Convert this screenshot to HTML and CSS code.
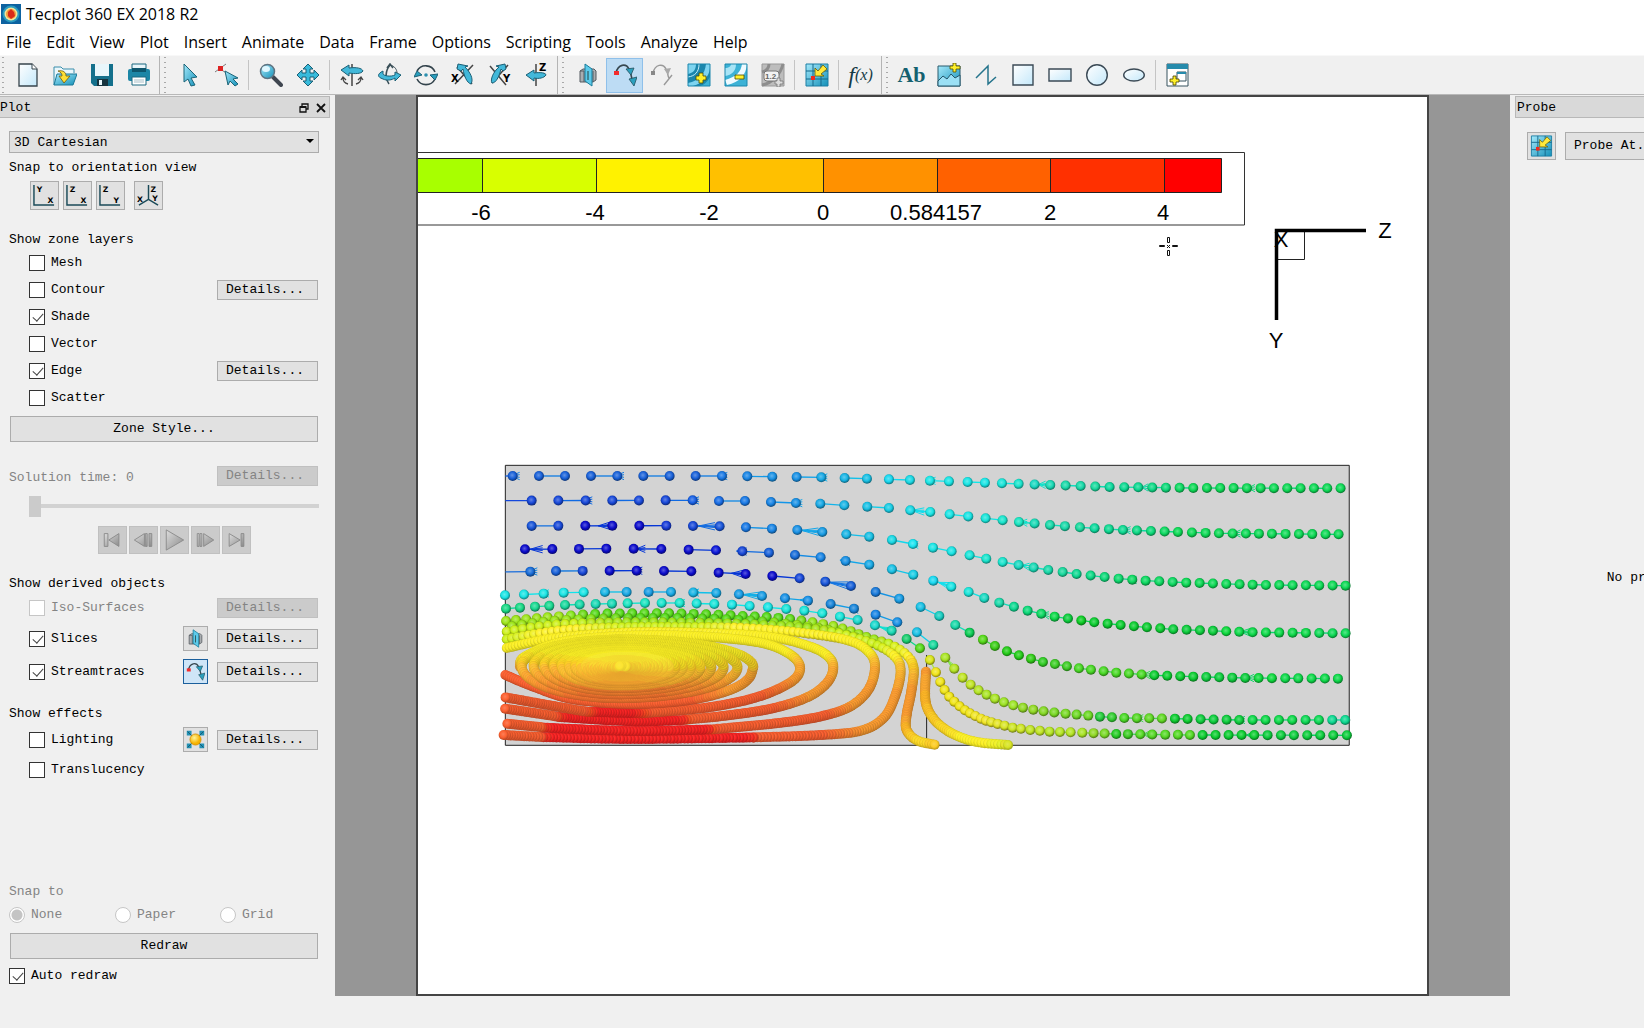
FILE: index.html
```
<!DOCTYPE html>
<html lang="en">
<head>
<meta charset="utf-8">
<title>Tecplot 360 EX 2018 R2</title>
<link rel="stylesheet" href="styles.css">
</head>
<body>
<svg class="defs" aria-hidden="true">
  <defs>
    <linearGradient id="aqua" x1="0" y1="0" x2="1" y2="1"><stop offset="0" stop-color="#a5e9fb"/><stop offset="1" stop-color="#1390b8"/></linearGradient>
    <linearGradient id="pale" x1="0" y1="0" x2="1" y2="1"><stop offset="0" stop-color="#fff"/><stop offset="1" stop-color="#c4e8fa"/></linearGradient>
    <linearGradient id="steel" x1="0" y1="0" x2="1" y2="1"><stop offset="0" stop-color="#ddd"/><stop offset="1" stop-color="#8a8a8a"/></linearGradient>
    <radialGradient id="sun" cx=".4" cy=".35"><stop offset="0" stop-color="#fff59a"/><stop offset="1" stop-color="#f6b300"/></radialGradient>
  </defs>
  <symbol id="i-slice" viewBox="0 0 24 24">
    <path d="M4 8l3-2h11l2 2v9l-3 2H4z" fill="#a9adb0" stroke="#555b60"/><path d="M4 8h4v11M17 19V8" fill="none" stroke="#555b60"/>
    <path d="M9 1l7 5v17l-7-5z" fill="#5ccaea" stroke="#197d9c"/><path d="M12 8v9" stroke="#244"/>
  </symbol>
  <symbol id="i-stream" viewBox="0 0 24 24">
    <path d="M3 10C5 1 13 0 16 6s2 9 4 13" fill="none" stroke="#37474f" stroke-width="1.6"/>
    <path d="M13 6l8-1-3 7zM16 16l8-2-3 9z" fill="#2ba0be" stroke="#24505e" stroke-width=".8"/><path d="M1 8h5v4H1z" fill="#f32c2c"/>
  </symbol>
  <symbol id="i-probe" viewBox="0 0 24 24">
    <path d="M1 1h22v22H1z" fill="url(#aqua)" stroke="#1c7fa4"/><path d="M1 8h22M1 16h22M8 1v22M16 1v22" stroke="#17688a" fill="none"/>
    <path d="M6 13h4v4H6z" fill="#f02a1c"/><path d="M10 13V5l3 3 5-6 4 4-6 5 3 2z" fill="#ffe93b" stroke="#6a5c00" stroke-width=".8"/>
  </symbol>
</svg>

<header class="title-bar">
  <svg width="20" height="20" viewBox="0 0 20 20" aria-hidden="true"><path d="M0 0h20v20H0z" fill="#0d62a0"/><circle cx="10" cy="10" r="8.5" fill="#2b9cc0"/><circle cx="10" cy="10" r="6.5" fill="#f3e59a"/><circle cx="10" cy="10" r="5" fill="#f29b3c"/><path d="M10 5l3 3 1 4-4 3-3-3 0-4z" fill="#d92a1a"/></svg>
  <h1>Tecplot 360 EX 2018 R2</h1>
</header>

<nav class="menu-bar" aria-label="Main menu">
  <button>File</button><button>Edit</button><button>View</button><button>Plot</button><button>Insert</button><button>Animate</button><button>Data</button><button>Frame</button><button>Options</button><button>Scripting</button><button>Tools</button><button>Analyze</button><button>Help</button>
</nav>

<div class="toolbar" role="toolbar" aria-label="Tools">
  <span class="grip first"></span>
  <button aria-label="New"><svg viewBox="0 0 24 24"><path d="M3 1h13l5 5v17H3z" fill="url(#pale)" stroke="#37444c" stroke-width="1.3"/><path d="M16 1v5h5" fill="#fff" stroke="#37444c"/></svg></button>
  <button aria-label="Open"><svg viewBox="0 0 24 24"><path d="M1 22V4h7l2 2h11v4" fill="#e9f6fb" stroke="#3a8eac"/><path d="M1 22L4 11h20l-4 11z" fill="url(#aqua)" stroke="#1a7898"/><path d="M5 8c5-1 8 1 8 5h4l-6 7-5-7h3c0-2-1-4-4-5z" fill="#ffdf35" stroke="#6d5a10" stroke-width=".8"/></svg></button>
  <button aria-label="Save"><svg viewBox="0 0 24 24"><path d="M1 1h22v22H4l-3-3z" fill="#14708c"/><path d="M5 1h14v12H5z" fill="#e8f6fb"/><path d="M7 16h11v7H7z" fill="#16343f"/><path d="M9 17h3v5H9z" fill="#e8f6fb"/></svg></button>
  <button aria-label="Print"><svg viewBox="0 0 24 24"><path d="M5 1h14v8H5z" fill="#e7f5fa" stroke="#1b6880"/><rect x="1" y="6" width="22" height="12" rx="2" fill="#1c86a6"/><path d="M5 5h14v4H5z" fill="#0e566d"/><path d="M5 14h14v8H5z" fill="#fff" stroke="#1b6880"/><path d="M7 17h10M7 19h10" stroke="#a8bfc8"/></svg></button>
  <span class="grip"></span>
  <button aria-label="Select"><svg viewBox="0 0 24 24"><path d="M6 1l13 13-6 1 4 7-4 1-3-7-4 3z" fill="url(#aqua)" stroke="#1b6478"/></svg></button>
  <button aria-label="Adjust"><svg viewBox="0 0 24 24"><path d="M0 9L11 1M5 6l8 5" stroke="#7a7a7a"/><path d="M3 3h5v5H3z" fill="#d22"/><path d="M10 8l13 7-5 1 5 5-3 2-5-5-2 4z" fill="url(#aqua)" stroke="#1b6478"/></svg></button>
  <span class="rule"></span>
  <button aria-label="Zoom"><svg viewBox="0 0 24 24"><path d="M14 14l8 8" stroke="#3f4650" stroke-width="4" stroke-linecap="round"/><circle cx="8.500" cy="8.500" r="7" fill="url(#aqua)" stroke="#5f7482" stroke-width="1.500"/><ellipse cx="7" cy="6" rx="4" ry="3" fill="#dff7ff"/></svg></button>
  <button aria-label="Translate"><svg viewBox="0 0 24 24"><path d="M12 1l5 5h-3v4h4V7l5 5-5 5v-3h-4v4h3l-5 5-5-5h3v-4H6v3l-5-5 5-5v3h4V6H7z" fill="#38bbdc" stroke="#1b5f75"/></svg></button>
  <span class="rule"></span>
  <button aria-label="Rotate spherical"><svg viewBox="0 0 24 24"><path d="M12 1v22" stroke="#444" stroke-width="1.500"/><path d="M1 7l8-5v3c7-1 13 0 14 3-2 3-8 3-14 2v3z" fill="#42b8d9" stroke="#1b5f75"/><path d="M8 21c-4-1-5-4-5-6M1 17l2-3 3 3M16 21c4-1 5-4 5-6M18 17l3-3 2 3" fill="none" stroke="#444" stroke-width="1.300"/></svg></button>
  <button aria-label="Rotate rollerball"><svg viewBox="0 0 24 24"><path d="M12 21C8 16 8 8 13 2M10 5l3-4 3 4" fill="none" stroke="#3a4f58" stroke-width="1.600"/><path d="M6 8c-6 3-6 6 0 8 4 2 9 1 12-1v3l6-6-6-3v3c-4 2-11 1-12-1z" fill="#42b8d9" stroke="#1b5f75"/><path d="M13 2c5 1 7 5 7 8" fill="none" stroke="#3a4f58"/></svg></button>
  <button aria-label="Rotate twist"><svg viewBox="0 0 24 24"><path d="M3 8a10 10 0 0 1 18 1M21 16a10 10 0 0 1-18 0" fill="none" stroke="#33434c" stroke-width="1.600"/><path d="M0 14l3-6 5 4zM16 12l8-1-3 6z" fill="#2b9fbe" stroke="#1b5f75"/><circle cx="12" cy="12" r="1.800" fill="#2b8fae"/></svg></button>
  <button aria-label="Rotate X"><svg viewBox="0 0 24 24"><path d="M22 2L4 21M6 4l15 17" stroke="#444" stroke-width="1.500"/><path d="M6 6l1-5 10 2-3 1c5 5 9 12 6 17-4-1-7-8-8-15l-2 2z" fill="#42b8d9" stroke="#1b5f75"/><text x="0" y="19" class="tool-letter">X</text></svg></button>
  <button aria-label="Rotate Y"><svg viewBox="0 0 24 24"><path d="M2 3l16 19M20 2L4 20" stroke="#444" stroke-width="1.500"/><path d="M18 6l-1-5-9 2 3 1C5 9 2 17 4 20c4 0 7-6 9-14l2 2z" fill="#42b8d9" stroke="#1b5f75"/><text x="15" y="19" class="tool-letter">Y</text></svg></button>
  <button aria-label="Rotate Z"><svg viewBox="0 0 24 24"><path d="M11 1v22" stroke="#444" stroke-width="1.500"/><path d="M1 12l8-5v3c7-1 12 0 12 2-2 3-7 4-12 3v3z" fill="#42b8d9" stroke="#1b5f75"/><text x="14" y="8" class="tool-letter">Z</text></svg></button>
  <span class="grip"></span>
  <button aria-label="Slice"><svg><use href="#i-slice"/></svg></button>
  <button aria-label="Streamtrace" class="active" aria-pressed="true"><svg><use href="#i-stream"/></svg></button>
  <button aria-label="Streamtrace termination line" disabled><svg viewBox="0 0 24 24"><path d="M3 10C5 1 13 0 16 6s1 6 3 9M14 22l8-10" fill="none" stroke="#999" stroke-width="1.400"/><path d="M14 6l7-1-3 7z" fill="#aaa"/><path d="M1 8h4v4H1z" fill="#888"/></svg></button>
  <button aria-label="Add contour level"><svg viewBox="0 0 24 24"><path d="M1 1h22v22H1z" fill="#1b86ac"/><path d="M1 1h8c0 6-3 9-8 10z" fill="#7ed4f0"/><path d="M12 1c0 8-4 12-11 13" fill="none" stroke="#c5eefb"/><path d="M23 5c-1 9-7 15-17 18H1v-3C12 18 18 11 19 1h4z" fill="#7ed4f0"/><path d="M23 14c-3 5-6 8-10 9h10z" fill="#3cb2d6"/><path d="M12 10h4v3h3v4h-3v3h-4v-3H9v-4h3z" fill="#fff02a" stroke="#4a4a00" stroke-width=".8"/><path d="M1 1h22v22H1z" fill="none" stroke="#1b86ac"/></svg></button>
  <button aria-label="Delete contour level"><svg viewBox="0 0 24 24"><path d="M1 1h22v22H1z" fill="#3cb2d6"/><path d="M1 5c4 0 6-2 6-4h5c0 7-4 11-11 12z" fill="#a8e4f6"/><path d="M1 17C12 14 17 9 18 1h5c-1 11-7 18-20 21z" fill="#effaff"/><path d="M11 12h9v4h-9z" fill="#fff02a" stroke="#4a4a00" stroke-width=".8"/><path d="M1 1h22v22H1z" fill="none" stroke="#1b86ac"/></svg></button>
  <button aria-label="Add contour label" disabled><svg viewBox="0 0 24 24"><path d="M1 1h22v22H1z" fill="#bdbdbd" stroke="#999"/><path d="M1 22C12 20 20 10 22 1M8 1c0 5-3 7-7 8" fill="none" stroke="#8d8d8d" stroke-width="3"/><rect x="3" y="8" width="15" height="10" rx="3" fill="#f2f2f2" stroke="#777"/><text x="4" y="16" class="tool-number">1.2</text><path d="M16 15h3v3h3v3h-3v3h-3v-3h-2v-3h2z" fill="#ddd" stroke="#777" stroke-width=".8"/></svg></button>
  <span class="rule"></span>
  <button aria-label="Probe"><svg><use href="#i-probe"/></svg></button>
  <span class="rule"></span>
  <button aria-label="Extract function" class="fx">f<small>(x)</small></button>
  <span class="grip"></span>
  <button aria-label="Text" class="ab">Ab</button>
  <button aria-label="Image"><svg viewBox="0 0 24 24"><path d="M1 3h22v20H1z" fill="url(#aqua)" stroke="#2a5a6c"/><path d="M1 18l5-5 4 3 4-5 4 4 5-3v11H1z" fill="#9be0f5" stroke="#24566a"/><path d="M16 0h3v3h4v3h-4v3h-3V6h-3V3h3z" fill="#fff02a" stroke="#555000" stroke-width=".8"/></svg></button>
  <button aria-label="Polyline"><svg viewBox="0 0 24 24"><path d="M2 15L14 3v18l8-7" fill="none" stroke="#25748c" stroke-width="1.500"/></svg></button>
  <button aria-label="Square"><svg viewBox="0 0 24 24"><path d="M2 2h20v20H2z" fill="url(#pale)" stroke="#3b4a56" stroke-width="1.400"/></svg></button>
  <button aria-label="Rectangle"><svg viewBox="0 0 24 24"><path d="M1 6h22v12H1z" fill="url(#pale)" stroke="#3b4a56" stroke-width="1.400"/></svg></button>
  <button aria-label="Circle"><svg viewBox="0 0 24 24"><circle cx="12" cy="12" r="10.300" fill="url(#pale)" stroke="#3b4a56" stroke-width="1.400"/></svg></button>
  <button aria-label="Ellipse"><svg viewBox="0 0 24 24"><ellipse cx="12" cy="12" rx="10.300" ry="6" fill="url(#pale)" stroke="#3b4a56" stroke-width="1.400"/></svg></button>
  <span class="rule"></span>
  <button aria-label="Create frame"><svg viewBox="0 0 24 24"><path d="M1 1h21v22H1z" fill="#fff" stroke="#37525f"/><path d="M1 1h21v5H1z" fill="#268bac"/><path d="M11 9h9v9h-9z" fill="#fff" stroke="#37525f"/><path d="M11 9h9v2h-9z" fill="#268bac"/><path d="M7 13h3v3h3v3h-3v3H7v-3H4v-3h3z" fill="#fff02a" stroke="#444000" stroke-width=".8"/></svg></button>
</div>

<main class="desk">
  <aside class="panel" aria-label="Plot">
    <div class="panel-head"><h2>Plot</h2>
      <button aria-label="Float"><svg width="10" height="10" viewBox="0 0 10 10"><path d="M3 3V1h6v5H7M1 4h6v5H1z" fill="none" stroke="#111" stroke-width="1.300"/><path d="M1 4h6" stroke="#111" stroke-width="2"/></svg></button>
      <button aria-label="Close"><svg width="10" height="10" viewBox="0 0 10 10"><path d="M1 1l8 8M9 1L1 9" stroke="#111" stroke-width="1.800"/></svg></button>
    </div>
    <div class="panel-body">
      <div class="combo"><select aria-label="Plot type"><option>3D Cartesian</option></select><svg width="8" height="5" viewBox="0 0 8 5" aria-hidden="true"><path d="M0 0h8L4 4z"/></svg></div>
      <h3 class="tall">Snap to orientation view</h3>
      <div class="snap">
        <button aria-label="XY view"><svg viewBox="0 0 24 24"><path d="M1 1v21h21" class="axis"/><text x="4" y="8">Y</text><text x="15" y="20">X</text></svg></button>
        <button aria-label="XZ view"><svg viewBox="0 0 24 24"><path d="M1 1v21h21" class="axis"/><text x="4" y="8">Z</text><text x="15" y="20">X</text></svg></button>
        <button aria-label="YZ view"><svg viewBox="0 0 24 24"><path d="M1 1v21h21" class="axis"/><text x="4" y="8">Z</text><text x="15" y="20">Y</text></svg></button>
        <button aria-label="3D view" class="iso"><svg viewBox="0 0 24 24"><path d="M12 1v15L2 22M12 16l10 6" class="axis"/><text x="14" y="8">Z</text><text x="0" y="19">X</text><text x="16" y="18">Y</text></svg></button>
      </div>
      <h3 class="zones">Show zone layers</h3>
      <div class="row"><label><input type="checkbox">Mesh</label></div>
      <div class="row"><label><input type="checkbox">Contour</label><button class="btn">Details...</button></div>
      <div class="row"><label><input type="checkbox" checked>Shade</label></div>
      <div class="row"><label><input type="checkbox">Vector</label></div>
      <div class="row"><label><input type="checkbox" checked>Edge</label><button class="btn">Details...</button></div>
      <div class="row"><label><input type="checkbox">Scatter</label></div>
      <button class="btn wide">Zone Style...</button>
      <div class="time"><span id="time-label">Solution time: 0</span><button class="btn" disabled>Details...</button></div>
      <input class="slider" type="range" min="0" max="1" value="0" disabled aria-labelledby="time-label">
      <div class="player">
        <button aria-label="First" disabled><svg viewBox="0 0 24 24"><path d="M3 5h4v14H3zM19 5v14L8 12z"/></svg></button>
        <button aria-label="Back" disabled><svg viewBox="0 0 24 24"><path d="M13 5v14L2 12zM14 5h2v14h-2zM18 5h3v14h-3z"/></svg></button>
        <button aria-label="Play" disabled><svg viewBox="0 0 24 24"><path d="M3 1l19 11L3 23z"/></svg></button>
        <button aria-label="Forward" disabled><svg viewBox="0 0 24 24"><path d="M3 5h2v14H3zM6 5h2v14H6zM10 5v14l11-7z"/></svg></button>
        <button aria-label="Last" disabled><svg viewBox="0 0 24 24"><path d="M4 5v14l12-7zM17 5h3v14h-3z"/></svg></button>
      </div>
      <h3 class="derived">Show derived objects</h3>
      <div class="row"><label class="off"><input type="checkbox" disabled>Iso-Surfaces</label><button class="btn" disabled>Details...</button></div>
      <div class="row roomy"><label><input type="checkbox" checked>Slices</label><button class="pick" aria-label="Place slice"><svg><use href="#i-slice"/></svg></button><button class="btn">Details...</button></div>
      <div class="row roomy"><label><input type="checkbox" checked>Streamtraces</label><button class="pick active" aria-label="Place streamtrace"><svg><use href="#i-stream"/></svg></button><button class="btn">Details...</button></div>
      <h3 class="effects">Show effects</h3>
      <div class="row roomy"><label><input type="checkbox">Lighting</label><button class="pick" aria-label="Light source"><svg viewBox="0 0 24 24"><path d="M1 1h6v6H1zM17 1h6v6h-6zM1 17h6v6H1zM17 17h6v6h-6z" fill="#2391b4"/><path d="M2 2l20 20M22 2L2 22" stroke="#114e63"/><circle cx="12" cy="12" r="7" fill="url(#sun)" stroke="#d08a00"/></svg></button><button class="btn">Details...</button></div>
      <div class="row"><label><input type="checkbox">Translucency</label></div>
      <fieldset disabled>
        <legend>Snap to</legend>
        <div class="radios"><label><input type="radio" name="snap" checked>None</label><label><input type="radio" name="snap">Paper</label><label><input type="radio" name="snap">Grid</label></div>
      </fieldset>
      <button class="btn wide">Redraw</button>
      <div class="auto"><label><input type="checkbox" checked>Auto redraw</label></div>
    </div>
  </aside>

  <section class="workspace" aria-label="Workspace">
    <div class="paper">
      <svg class="plot" viewBox="418 97 1009 896" role="img" aria-label="Streamtraces coloured by contour level">
        <path d="M410 152.500h834.500v72.500H410" fill="none" stroke="#333"/>
        <g>
          <path d="M410 158.500h72.500v34H410z" fill="#a8ff00"/><path d="M482.500 158.500h114v34h-114z" fill="#d8ff00"/><path d="M596.500 158.500h113v34h-113z" fill="#fff200"/><path d="M709.500 158.500h114v34h-114z" fill="#ffc000"/><path d="M823.500 158.500h114v34h-114z" fill="#ff9100"/><path d="M937.500 158.500h113v34h-113z" fill="#ff6100"/><path d="M1050.500 158.500h114v34h-114z" fill="#ff3000"/><path d="M1164.500 158.500h57v34h-57z" fill="#f00"/>
        </g>
        <path d="M410 158.500h811.500v34H410M482.500 158v34M596.500 158v34M709.500 158v34M823.500 158v34M937.500 158v34M1050.500 158v34M1164.500 158v34" fill="none" stroke="#222"/>
        <g class="scale"><text x="481" y="220">-6</text><text x="595" y="220">-4</text><text x="709" y="220">-2</text><text x="823" y="220">0</text><text x="936" y="220">0.584157</text><text x="1050" y="220">2</text><text x="1163" y="220">4</text><text x="1281" y="247">X</text><text x="1385" y="238">Z</text><text x="1276" y="348">Y</text></g>
        <path d="M1277 259.500h27.500V231" fill="none" stroke="#222"/>
        <path d="M1366 230.500h-89.500V320" fill="none" stroke="#000" stroke-width="3.500"/>
        <path d="M1167.500 237.500h2v5h-2zM1167.500 250.500h2v5h-2zM1159.500 245.500h5v1h-5zM1172.500 245.500h5v1h-5zM1167 245l3 3M1170 245l-3 3" fill="none" stroke="#111"/>
        <g id="flow" transform="translate(490 455) scale(.3333)"></g>
      </svg>
    </div>
  </section>

  <aside class="probe" aria-label="Probe">
    <div class="probe-inner">
      <div class="panel-head"><h2>Probe</h2></div>
      <div class="probe-tools"><button class="probe-pick" aria-label="Probe tool"><svg><use href="#i-probe"/></svg></button><button class="probe-at">Probe At...</button></div>
      <p>No probe</p>
    </div>
  </aside>
</main>
<footer class="status"></footer>
<script src="flow.js"></script>
</body>
</html>
```
FILE: styles.css
```
* { box-sizing: border-box; }
body {
  margin: 0;
  min-height: 100vh;
  display: flex;
  flex-direction: column;
  background: #f0f0f0;
  color: #000;
  font: 13px/20px "Liberation Mono", monospace;
  overflow-x: hidden;
}
button, select, input { font: inherit; color: inherit; }
button { padding: 0; border: 0; background: none; }
h1, h2, h3, p { margin: 0; font-weight: 400; font-size: inherit; }
.defs { position: absolute; width: 0; height: 0; }

.title-bar {
  display: flex;
  align-items: center;
  gap: 5px;
  height: 28px;
  padding-left: 1px;
  background: #fff;
  font: 16px/24px "Open Sans", sans-serif;
}
.menu-bar {
  display: flex;
  gap: 15px;
  height: 27px;
  padding-left: 6px;
  background: #fff;
  font: 16px/24px "Open Sans", sans-serif;
}

.toolbar {
  display: flex;
  align-items: center;
  height: 40px;
  border-top: 1px solid #f8f8f8;
  border-bottom: 1px solid #b8b8b8;
}
.toolbar button {
  display: flex;
  align-items: center;
  justify-content: center;
  flex: none;
  width: 37px;
  height: 35px;
}
.toolbar svg { width: 24px; height: 24px; }
.toolbar .active { border: 1px solid #8fc0ea; background: #bddcf4; }
.grip { flex: none; width: 12px; height: 38px; margin-left: 2px; border-left: 1px solid #b4b4b4; background: radial-gradient(circle at 50% 50%, #a8a8a8 1px, transparent 1px) 3px 4px / 4px 5px repeat-y; }
.grip.first { width: 9px; margin-left: 0; border-left: 0; background-position: 1px 4px; }
.rule { flex: none; width: 7px; height: 30px; background: linear-gradient(#c4c4c4, #c4c4c4) 3px 0 / 1px 100% no-repeat; }
.tool-letter { font: bold 10px "DejaVu Sans", sans-serif; }
.tool-number { font: bold 8px "Liberation Sans", sans-serif; fill: #666; }
.fx { font: italic 24px/24px "Liberation Serif", serif; color: #153a44; }
.fx small { font-size: 16px; }
.ab { font: bold 22px/24px "Liberation Serif", serif; color: #14606f; }

.desk {
  flex: 1;
  display: grid;
  grid-template-columns: 335px minmax(0, 1fr) 134px;
}
.panel { display: flex; flex-direction: column; padding-top: 1px; }
.panel-head {
  display: flex;
  align-items: center;
  gap: 7px;
  height: 22px;
  margin-right: 5px;
  padding: 1px 3px 0 0;
  border: 1px solid #b8b8b8;
  border-left: 0;
  background: #d9d9d9;
}
.panel-head h2 { flex: 1; }
.panel-head button { display: flex; }
.panel-body { flex: 1; display: flex; flex-direction: column; padding: 13px 16px 4px 9px; }
.combo { display: flex; position: relative; height: 22px; }
.combo select { flex: 1; appearance: none; padding: 1px 4px 0; border: 1px solid #acacac; border-radius: 0; background: #e1e1e1; }
.combo svg { position: absolute; right: 5px; top: 8px; }
h3 { height: 20px; line-height: 22px; }
h3.tall { height: 28px; line-height: 30px; }
.snap { display: flex; gap: 4px; padding-left: 21px; }
.snap button { width: 29px; height: 29px; padding: 2px; border: 1px solid #acacac; background: #e1e1e1; }
.snap .iso { margin-left: 5px; }
.snap svg, .player svg { display: block; width: 100%; height: 100%; }
.snap text { font: bold 8px "DejaVu Sans", sans-serif; }
.axis { fill: none; stroke: #1a4a58; stroke-width: 1.5; }
.zones, .derived { margin-top: 19px; }
.effects { margin-top: 15px; }
.row { display: flex; align-items: center; gap: 9px; height: 27px; padding: 0 1px 0 20px; }
.row.roomy { height: 33px; }
.derived + .row { height: 29px; }
label { display: flex; align-items: center; gap: 6px; line-height: 22px; }
.row label { flex: 1; }
.off, fieldset { color: #848484; }
input[type="checkbox"], input[type="radio"] {
  appearance: none;
  flex: none;
  width: 16px;
  height: 16px;
  margin: 0;
  border: 1px solid #333;
  background: #fff;
}
input[type="checkbox"]:checked::after {
  content: "";
  display: block;
  width: 5px;
  height: 9px;
  margin: 1px 0 0 5px;
  border: solid #444;
  border-width: 0 1px 1px 0;
  transform: rotate(42deg);
}
input[type="checkbox"]:disabled, input[type="radio"] { border-color: #c6c6c6; }
input[type="radio"] { border-radius: 50%; }
input[type="radio"]:checked { background: radial-gradient(#c4c4c4 5px, #fff 6px); }
.btn { width: 101px; height: 20px; padding-right: 5px; border: 1px solid #acacac; background: #e1e1e1; line-height: 18px; }
.btn:disabled { border-color: #c0c0c0; background: #cbcbcb; color: #848484; }
.wide { flex: none; width: auto; height: 26px; margin: 5px 1px 0; padding-right: 0; }
.time { display: flex; justify-content: space-between; height: 22px; margin-top: 24px; padding-right: 1px; color: #848484; line-height: 24px; }
.slider { appearance: none; flex: none; height: 22px; margin: 7px 0 0 20px; background: linear-gradient(#d2d2d2, #d2d2d2) 0 9px / 100% 4px no-repeat; }
.slider::-webkit-slider-thumb { appearance: none; width: 12px; height: 21px; background: #cbcbcb; }
.player { display: flex; justify-content: center; gap: 2px; margin-top: 9px; padding-left: 21px; }
.player button { width: 29px; height: 28px; padding: 2px; border: 1px solid #c0c0c0; background: #cbcbcb; }
.player path { fill: url(#steel); stroke: #8a8a8a; }
.pick { flex: none; width: 25px; height: 25px; padding: 2px; border: 1px solid #acacac; background: #e1e1e1; }
.pick.active { border-color: #1b5f9c; background: #cfe5f7; }
.pick svg { display: block; width: 19px; height: 19px; }
fieldset { margin: auto 0 0; padding: 0; border: 0; }
legend { padding: 0; }
.radios { display: grid; grid-template-columns: 106px 105px 1fr; height: 26px; }
.auto { display: flex; height: 33px; }

.workspace { display: flex; padding: 0 81px; background: #969696; }
.paper { flex: 1; border: 2px solid #444; background: #fff; }
.plot { display: block; width: 100%; height: auto; }
.scale { font: 22px "Liberation Sans", sans-serif; text-anchor: middle; }

.probe { overflow: hidden; padding: 1px 0 0 5px; }
.probe-inner { display: flex; flex-direction: column; width: 246px; height: 100%; }
.probe .panel-head { margin-right: 0; border-left: 1px solid #b8b8b8; padding-left: 1px; }
.probe-tools { display: flex; gap: 9px; padding: 14px 0 0 12px; }
.probe-pick { width: 29px; height: 28px; padding: 2px; border: 1px solid #acacac; background: #e1e1e1; }
.probe-pick svg { display: block; width: 23px; height: 22px; }
.probe-at { flex: 1; padding-left: 8px; border: 1px solid #acacac; background: #e1e1e1; text-align: left; }
.probe p { flex: 1; display: grid; place-items: center; }
.status { height: 32px; }
```
FILE: flow.js
```
// Draws the streamtraces: beads strung along paths, shaded as small spheres.
const NS = 'http://www.w3.org/2000/svg';
const flow = document.getElementById('flow');
const add = (parent, name, attrs) => {
  const el = document.createElementNS(NS, name);
  for (const k in attrs) el.setAttribute(k, attrs[k]);
  parent.appendChild(el);
  return el;
};
const defs = add(flow, 'defs', {});
const rgb = h => [1, 3, 5].map(i => parseInt(h.substr(i, 2), 16));
const hex = c => '#' + c.map(v => Math.round(v).toString(16).padStart(2, '0')).join('');
const mix = (a, b, t) => a.map((v, i) => v + (b[i] - v) * t);
const made = {};
// rim: how dark the edge of the sphere gets; closely packed beads need a light one.
function shade(c, rim) {
  const q = c.map(v => Math.min(255, Math.round(v / 12) * 12));
  const id = 'b' + hex(q).slice(1) + Math.round(rim * 100);
  if (!made[id]) {
    made[id] = 1;
    const g = add(defs, 'radialGradient', { id, cx: .45, cy: .42, r: .6 });
    add(g, 'stop', { offset: 0, 'stop-color': hex(mix(q, [255, 255, 255], rim * .65)) });
    add(g, 'stop', { offset: .55, 'stop-color': hex(q) });
    add(g, 'stop', { offset: 1, 'stop-color': hex(mix(q, [0, 0, 0], rim)) });
  }
  return `url(#${id})`;
}
const bead = (x, y, c, rim = .5) => add(flow, 'circle', { cx: x.toFixed(1), cy: y.toFixed(1), r: 15, fill: shade(c, rim) });
const link = (x1, y1, x2, y2, c) => add(flow, 'path', { d: `M${x1} ${y1}L${x2} ${y2}`, stroke: hex(c), 'stroke-width': 4 });
function at(table, x, f) {
  let i = 1;
  while (i < table.length - 1 && table[i][0] < x) i++;
  const [a, b] = [table[i - 1], table[i]];
  return f(a[1], b[1], Math.max(0, Math.min(1, (x - a[0]) / (b[0] - a[0]))));
}
const num = (a, b, t) => a + (b - a) * t;
const col = (a, b, t) => mix(rgb(a), rgb(b), t);
const table = s => s.split(' ').map(p => { const [x, v] = p.split(','); return [+x, v[0] === '#' ? v : +v]; });

add(flow, 'path', { d: 'M46 31H2578V871H46z', fill: '#d3d3d3', stroke: '#222', 'stroke-width': 3 });
add(flow, 'path', { d: 'M1310 600V871', stroke: '#222', 'stroke-width': 3 });

function dashes(xs, ys, cs, first, heads) {
  xs = xs.split(' ').map(Number); ys = table(ys); cs = table(cs);
  const Y = x => at(ys, x, num), C = x => at(cs, x, col);
  if (first && xs[0] > 50) link(46, Y(46), xs[0], Y(xs[0]), C(xs[0]));
  for (let i = first; i + 1 < xs.length; i += 2) {
    link(xs[i], Y(xs[i]), xs[i + 1], Y(xs[i + 1]), mix(C(xs[i]), [0, 240, 255], .2));
  }
  for (const [x, n] of heads) {
    const y = Y(x), e = Y(x + n), c = hex(mix(C(x), [0, 240, 255], .2));
    add(flow, 'path', { d: `M${x + n} ${e - 11}L${x} ${y}L${x + n} ${e + 11}M${x} ${y}L${x + n} ${e - 4}M${x} ${y}L${x + n} ${e + 4}`, stroke: c, 'stroke-width': 3, fill: 'none' });
  }
  for (const x of xs) bead(x, Y(x), C(x));
}
const R = ' 2328 2368 2408 2448 2488 2528 2567';
dashes('68 147 225 303 382 460 539 617 696 772 847 920 994 1064 1131 1197 1260 1320 1377 1433 1485 1536 1586 1634 1681 1727 1772 1816 1859 1903 1945 1987 2028 2069 2110 2151 2191 2231 2271 2312 2352 2392 2432 2472 2512 2552',
  '0,63 696,63 994,67 1131,71 1320,77 1485,83 1681,90 1859,96 2110,99 2560,100',
  '0,#1860dc 617,#1860dc 772,#1884e4 920,#1890e4 1064,#18b4e4 1197,#14d4ec 1320,#14e4e8 1485,#14e4e0 1681,#14dcb4 1987,#10d488 2110,#0cd454 2560,#0cd454', 1,
  [[62, 27], [375, 27], [685, 27], [985, 27], [1315, 22], [1645, 22], [1955, 20], [2275, 20]]);
dashes('125 205 287 367 447 527 608 687 765 843 918 991 1063 1132 1197 1261 1321 1379 1435 1487 1538 1587 1634 1680 1725 1770 1814 1857 1899 1941 1983 2024 2064 2106 2147 2187 2228 2268 2307 2346 2387 2427 2467 2507 2546',
  '0,137 608,136 687,138 765,138 843,141 918,144 991,146 1063,151 1132,155 1197,159 1261,166 1321,171 1379,178 1487,190 1587,201 1680,210 1770,217 1899,225 2064,231 2187,235 2546,238',
  '0,#1448dc 527,#1448dc 687,#1870e0 843,#1880e4 991,#18a4e4 1132,#14c4e4 1321,#14e0e8 1487,#14e4dc 1634,#14dcb0 1941,#10d488 2064,#0cd454 2546,#0cd454', 1,
  [[280, 27], [600, 27], [910, 27], [1265, 38], [1590, 22], [1900, 22], [2230, 22]]);
dashes('125 205 286 367 448 529 609 689 768 846 922 997 1069 1138 1206 1269 1329 1385 1439 1489 1538 1586 1631 1675 1718 1760 1802 1844 1886 1927 1967 2008 2048 2089 2129 2169 2209 2249 2288' + R,
  '0,213 529,212 609,213 689,214 768,217 846,221 922,225 997,231 1069,238 1138,245 1206,255 1269,267 1329,278 1385,289 1439,301 1538,321 1586,330 1675,345 1760,357 1886,371 1967,377 2089,383 2249,388 2328,390 2567,392',
  '0,#1858d8 205,#1448d8 286,#0808cc 448,#0808cc 529,#1440d8 689,#1850d8 768,#187ce0 997,#189ce4 1138,#14c4e4 1269,#14e0ec 1538,#14e0cc 1675,#14d8a8 1927,#0cd45c 2567,#0cd454', 0,
  [[325, 35], [625, 50], [935, 50], [1265, 20], [1595, 24], [1920, 20], [2240, 20]]);
dashes('105 187 267 349 431 514 596 678 757 837 915 992 1067 1138 1206 1270 1330 1384 1436 1483 1528 1572 1613 1654 1694 1734 1774 1813 1853 1892 1932 1971 2011 2050 2090 2130 2169 2209 2248 2288' + R,
  '105,283 349,281 514,282 678,286 757,289 837,293 915,300 992,307 1067,318 1138,329 1206,343 1270,359 1330,377 1384,395 1436,411 1483,429 1528,443 1613,467 1694,485 1813,502 1932,514 2050,523 2288,532 2567,535',
  '0,#0808cc 596,#0808cc 678,#0c1cd4 757,#1448d8 915,#1870dc 1067,#1894e4 1206,#14bce4 1330,#14dcec 1436,#14e0dc 1528,#14d8a8 1654,#0cd45c 1774,#0cd028 2567,#0cd454', 0,
  [[120, 38], [440, 26], [740, 30], [1050, 30], [1345, 35], [1655, 22], [1960, 20], [2250, 30]]);
dashes('121 198 278 359 440 522 604 686 767 847 929 1006 1083 1157 1228 1292 1348 1396 1439 1479 1515 1551 1587 1623 1659 1695 1731 1767 1803 1841 1879 1917 1955 1993 2032 2071 2110 2149 2188 2227 2266 2306 2346 2386 2425 2465 2505 2544',
  '0,351 121,350 198,348 440,347 604,349 686,353 767,357 847,363 929,370 1006,380 1083,393 1157,411 1228,431 1292,456 1348,483 1396,510 1439,533 1479,554 1515,573 1551,589 1587,601 1659,621 1767,640 1879,653 1993,661 2110,665 2266,669 2544,671',
  '0,#187cdc 121,#186cdc 278,#1448d8 359,#0808cc 847,#0808cc 929,#1448d8 1083,#1860dc 1157,#187cdc 1292,#14c4e8 1396,#14d8a8 1439,#10d058 1479,#54d418 1551,#20cc18 1803,#48d428 1955,#48d828 1993,#10d030 2544,#0cd44c', 1,
  [[115, 27], [430, 27], [725, 35], [1015, 60], [1960, 20], [2270, 22]]);
dashes('45 102 161 221 281 345 410 476 543 610 679 747 816 885 954 1022 1092 1157 1222 1281 1330 1366 1393 1418 1442 1466 1490 1515 1542 1570 1599 1630 1661 1693 1727 1760 1795 1830 1866 1903 1941 1978 2016 2055 2093 2132 2171 2210 2248 2288 2327 2367 2407 2447 2487 2527 2566',
  '45,421 161,416 221,413 345,411 543,411 679,414 747,418 816,423 885,430 954,437 1022,447 1092,461 1157,479 1222,502 1281,532 1330,570 1366,608 1393,641 1418,668 1442,689 1466,706 1490,719 1515,731 1542,742 1570,751 1599,758 1630,764 1661,769 1727,776 1830,785 1903,789 2055,791 2132,793 2248,795 2566,795',
  '0,#14e4e4 281,#14e0e8 345,#14b4e0 476,#189ce0 610,#14b4e4 747,#18a0e0 885,#1890e0 1092,#1880dc 1222,#188ce4 1281,#14c4e4 1330,#14d89c 1366,#a4e020 1418,#c4e420 1515,#a4e020 1795,#68d828 1830,#20c840 1903,#48d428 2016,#64d828 2055,#0cd030 2487,#0cd454 2527,#10d48c 2566,#10d48c', 1,
  [[150, 27], [462, 26], [600, 27], [758, 50], [930, 30], [1080, 25], [1370, 24], [1940, 20], [2245, 20]]);
dashes('48 90 135 178 225 269 317 366 413 465 515 569 620 673 726 779 834 889 943 997 1050 1103 1155 1205 1250 1290 1320 1338 1351 1364 1378 1393 1409 1425 1440 1456 1473 1488 1504 1523 1544 1568 1593 1621 1650 1679 1710 1742 1777 1811 1844 1879 1914 1951 1987 2026 2064 2100 2138 2177 2216 2255 2293 2333 2373 2412 2452 2491 2530 2571',
  '48,461 90,458 135,455 225,450 317,447 465,444 569,444 673,447 726,449 779,453 834,457 889,462 943,467 997,475 1050,485 1103,495 1155,511 1205,527 1250,552 1290,580 1320,615 1338,652 1351,681 1364,705 1378,725 1393,740 1409,754 1425,766 1440,775 1456,783 1473,791 1488,797 1520,806 1568,818 1621,825 1679,830 1742,832 1879,837 2100,840 2571,841',
  '0,#14d07c 135,#14d88c 317,#14dcb4 465,#14e0c4 620,#14e0d8 779,#14e4e4 1155,#14dccc 1205,#14d8b8 1250,#14d068 1290,#54d418 1320,#d4e418 1338,#f0e818 1488,#ece820 1593,#c8e420 1777,#a8e020 1844,#78d828 1879,#28d028 1951,#58d424 2100,#50d428 2138,#0cd030 2571,#0cd040', 0,
  [[165, 20], [555, 30], [1170, 40], [1960, 20], [2270, 20]]);

// Smooth path through [x, y, spacing, colour] knots, filled with beads.
function strand(knots) {
  const k = knots.split(' ').map(s => { const p = s.split(','); return [+p[0], +p[1], +p[2], rgb(p[3])]; });
  let left = 0;
  for (let i = 0; i < k.length - 1; i++) {
    const p = [k[Math.max(0, i - 1)], k[i], k[i + 1], k[Math.min(k.length - 1, i + 2)]];
    const cr = (t, j) => .5 * (2 * p[1][j] + (p[2][j] - p[0][j]) * t + (2 * p[0][j] - 5 * p[1][j] + 4 * p[2][j] - p[3][j]) * t * t + (3 * p[1][j] - p[0][j] - 3 * p[2][j] + p[3][j]) * t * t * t);
    let [px, py] = p[1];
    for (let n = 1; n <= 200; n++) {
      const t = n / 200, x = cr(t, 0), y = cr(t, 1);
      left -= Math.hypot(x - px, y - py);
      px = x; py = y;
      if (left <= 0) {
        const gap = num(p[1][2], p[2][2], t);
        bead(x, y, mix(p[1][3], p[2][3], t), gap > 18 ? .5 : gap > 11 ? .4 : .3);
        left += gap;
      }
    }
  }
}
const G = '#58d818', L = '#98e418', M = '#c8ec18', Yl = '#fff028', O = '#ff9c30', D = '#ff5c2c', Rd = '#ff2820';
strand(`48,498,30,${L} 130,491,32,${L} 210,484,36,${L} 315,477,37,${G} 425,475,37,${G} 540,475,37,${G} 650,478,37,${G} 760,483,36,${G} 880,490,35,${G} 985,505,32,${L} 1060,521,26,${L} 1140,550,24,${L} 1200,568,20,${M} 1250,600,14,${Yl} 1271,640,5,#ffd028 1264,710,5,${O} 1250,780,5,${O} 1250,825,5,#ffb428 1282,857,8,#ffd828 1338,870,8,#ffcc28`);
// Second bead of each outermost pair, tucked below the first row.
strand(`66,514,30,${L} 150,502,34,${L} 250,494,37,${L} 425,489,37,${G} 600,490,37,${G} 760,495,36,${G} 900,508,34,${L} 1000,522,30,${L} 1100,548,26,${L}`);
strand(`50,530,24,${M} 150,514,26,${M} 250,506,26,${M} 425,502,27,${L} 600,503,28,${L} 760,507,27,${L} 940,518,26,${L} 1050,536,22,${M} 1150,566,18,${M} 1215,605,10,${Yl} 1232,650,6,#ffbc2c 1215,725,6,${O} 1180,790,7,${O} 1110,828,8,${O} 980,841,9,${D} 800,847,10,${D} 760,848,10,${Rd} 425,852,11,${Rd} 180,847,10,${Rd} 150,846,9,${D} 40,840,7,${D}`);
strand(`50,553,16,${M} 150,535,18,${Yl} 250,523,19,${Yl} 425,516,20,${M} 600,516,20,${M} 760,519,19,${Yl} 940,534,15,${Yl} 1080,558,10,${Yl} 1140,595,7,${Yl} 1155,640,6,#ffb02c 1135,705,6,${O} 1080,755,7,${O} 990,785,7,${D} 860,805,8,${D} 680,822,9,${D} 640,824,9,${Rd} 425,828,10,${Rd} 180,819,9,${Rd} 150,816,8,${D} 50,806,7,${D}`);
strand(`50,579,9,${Yl} 200,549,11,${Yl} 425,532,13,${Yl} 640,534,12,${Yl} 840,546,9,${Yl} 960,575,7,${Yl} 1015,605,6,${Yl} 1030,640,6,#ffb02c 1010,685,6,${O} 950,728,7,${O} 840,762,7,${D} 700,783,8,${D} 600,793,9,${D} 560,796,9,${Rd} 425,799,9,${Rd} 220,787,8,${Rd} 190,783,8,${D} 45,761,7,${D}`);
strand(`90,635,6,${O} 105,605,6,${Yl} 220,560,8,${Yl} 425,542,10,${Yl} 640,545,8,${Yl} 810,563,7,${Yl} 895,595,6,${Yl} 930,635,6,#ffb02c 905,680,6,${O} 800,727,7,${D} 650,758,8,${D} 480,773,8,${D} 425,774,8,${Rd} 320,771,8,${Rd} 270,767,7,${D} 45,727,7,${D}`);

// Innermost turns spiral towards the vortex core.
strand(`46,660,7,${D} 130,695,7,${D} 250,733,7,${D} 425,747,7,${D} 600,735,7,${D} 720,705,7,${O} 775,672,6,${O} 790,635,6,#ffb02c`);
for (let r = 1, a = 0; r > .03;) {
  const c = Math.cos(a), s = Math.sin(a);
  const x = 395 + c * r * (c > 0 ? 395 : 320), y = 635 - s * r * (s > 0 ? 84 : 104);
  const warm = s > 0 ? mix(rgb('#ffcc28'), rgb(Yl), Math.min(1, s * 2)) : mix(rgb('#ffc42c'), r > .6 ? rgb('#ff742c') : rgb('#ff9c34'), Math.min(1, -s * 1.100));
  bead(x, y, mix(warm, rgb('#ffdc30'), (1 - r) * .4), r > .6 ? .28 : r > .4 ? .2 : .1);
  const step = 6.500 / (r * Math.hypot(s * 370, c * 95));
  a += step;
  r *= Math.pow(.88, step / (2 * Math.PI));
}
strand(`1308,650,5,${O} 1307,740,5,#ffb428 1332,793,6,#ffcc28 1375,829,7,#ffdc28 1425,852,8,${Yl} 1480,864,10,${Yl} 1556,870,10,#d8e820`);
```
